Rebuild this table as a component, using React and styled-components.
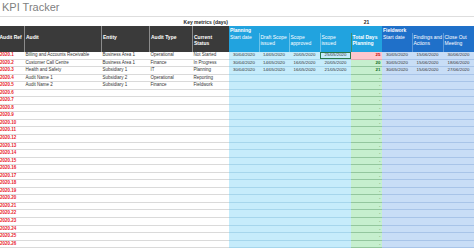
import React from 'react';
import styled, { createGlobalStyle } from 'styled-components';

const COLS = '24px 77px 48px 43px 37px 30px 30px 31px 31px 31px 30px 31px 31px';

const GlobalStyle = createGlobalStyle`
  html, body {
    margin: 0;
    padding: 0;
    background: #fff;
  }
  body {
    font-family: "Liberation Sans", Arial, sans-serif;
    width: 474px;
    height: 251px;
    overflow: hidden;
  }
`;

const Sheet = styled.div`
  width: 474px;
`;

const Title = styled.div`
  height: 17px;
  box-sizing: border-box;
  border-bottom: 1px solid #dedede;
  padding-left: 2px;
  font-size: 11px;
  line-height: 14px;
  color: #7f7f7f;
`;

const Grid = styled.div`
  display: grid;
  grid-template-columns: ${COLS};
`;

const MetricsRow = styled(Grid)`
  height: 9px;
  align-items: center;
  font-size: 5px;
  font-weight: 700;
  color: #1e1e1e;
`;

const MetricsLabel = styled.div`
  grid-column: 1 / 6;
  text-align: right;
  padding-right: 1px;
`;

const MetricsValue = styled.div`
  grid-column: 10;
  text-align: center;
`;

const Header = styled(Grid)`
  height: 26px;
  grid-template-rows: 7px 19px;
  font-size: 5px;
  line-height: 6.5px;
  color: #fff;
`;

const DarkHead = styled.div`
  grid-row: 1 / 3;
  background: #3a3a3a;
  font-weight: 700;
  padding: 7.5px 1px 0;
  white-space: nowrap;
  overflow: hidden;
  border-left: ${p => (p.$first ? 'none' : '1px solid #8c8c8c')};
  ${p => p.$first && 'padding-left: 0; text-indent: -0.5px;'}
`;

const GroupLabel = styled.div`
  grid-column: ${p => p.$cols};
  background: ${p => p.$bg};
  font-weight: 700;
  padding: 0.5px 0 0 1px;
`;

const SubHead = styled.div`
  background: ${p => p.$bg};
  padding: 0.5px 0 0 ${p => (p.$first ? '1px' : '0.5px')};
  border-left: ${p => (p.$first ? 'none' : `1px solid ${p.$line}`)};
  font-weight: ${p => (p.$bold ? 700 : 400)};
`;

const Row = styled(Grid)`
  height: 7.56px;
  line-height: 6.6px;
  color: #333;
`;

const TONES = {
  plain: { bg: '#ffffff', line: '#dadada' },
  plan: { bg: '#c6ecfb', line: '#a6d6ec' },
  total: { bg: '#c6efce', line: '#93c69e' },
  field: { bg: '#c8ddf6', line: '#a8c4e8' },
  bad: { bg: '#ffc7ce', line: '#e6a9b1' },
};

const Cell = styled.div`
  box-sizing: border-box;
  background: ${p => TONES[p.$tone].bg};
  border-bottom: 1px solid ${p => TONES[p.$tone].line};
  padding: 0 ${p => (p.$ref ? '0' : '1.5px')};
  white-space: nowrap;
  overflow: hidden;
  text-align: ${p => p.$align || 'left'};
  font-size: ${p => (p.$small ? '4.4px' : '4.5px')};
  color: ${p => p.$color || '#333'};
  font-weight: ${p => (p.$bold ? 700 : 400)};
  ${p => p.$selected && 'box-shadow: inset 0 0 0 1px #2b7a4b;'}
`;

const PLAN = '#21a3df';
const FIELD = '#1f70c9';

const audits = [
  ['Billing and Accounts Receivable', 'Business Area 1', 'Operational', 'Not Started', ['30/04/2020', '14/05/2020', '20/05/2020', '25/05/2020'], 25, ['30/05/2020', '15/06/2020', '30/06/2020']],
  ['Customer Call Centre', 'Business Area 1', 'Finance', 'In Progress', ['30/04/2020', '14/05/2020', '16/05/2020', '20/05/2020'], 20, ['30/05/2020', '15/06/2020', '18/06/2020']],
  ['Health and Safety', 'Subsidiary 1', 'IT', 'Planning', ['30/04/2020', '14/05/2020', '16/05/2020', '21/05/2020'], 21, ['30/05/2020', '15/06/2020', '27/06/2020']],
  ['Audit Name 1', 'Subsidiary 2', 'Operational', 'Reporting', [], null, []],
  ['Audit Name 2', 'Subsidiary 1', 'Finance', 'Fieldwork', [], null, []],
];

const rows = Array.from({ length: 26 }, (_, i) => {
  const a = audits[i] || ['', '', '', '', [], null, []];
  return { ref: `2020.${i + 1}`, name: a[0], entity: a[1], type: a[2], status: a[3], plan: a[4], total: a[5], field: a[6] };
});

const planHeads = ['Start date', 'Draft Scope issued', 'Scope approved', 'Scope issued'];
const fieldHeads = ['Start date', 'Findings and Actions', 'Close Out Meeting'];

export default function App() {
  return (
    <Sheet>
      <GlobalStyle />
      <Title>KPI Tracker</Title>
      <MetricsRow>
        <MetricsLabel>Key metrics (days)</MetricsLabel>
        <MetricsValue>21</MetricsValue>
      </MetricsRow>
      <Header>
        <DarkHead $first>Audit Ref</DarkHead>
        <DarkHead>Audit</DarkHead>
        <DarkHead>Entity</DarkHead>
        <DarkHead>Audit Type</DarkHead>
        <DarkHead>Current<br />Status</DarkHead>
        <GroupLabel $cols="6 / 11" $bg={PLAN}>Planning</GroupLabel>
        <GroupLabel $cols="11 / 14" $bg={FIELD}>Fieldwork</GroupLabel>
        {planHeads.map((h, i) => (
          <SubHead key={h} $bg={PLAN} $line="#6cc3ea" $first={i === 0}>{h}</SubHead>
        ))}
        <SubHead $bg={PLAN} $line="#3f8f6e" $bold>Total Days<br />Planning</SubHead>
        {fieldHeads.map((h, i) => (
          <SubHead key={h} $bg={FIELD} $line="#5f9ad9" $first={i === 0}>{h}</SubHead>
        ))}
      </Header>
      {rows.map((r, i) => (
        <Row key={r.ref}>
          <Cell $tone="plain" $ref $bold $color="#e8202a">{r.ref}</Cell>
          <Cell $tone="plain">{r.name}</Cell>
          <Cell $tone="plain">{r.entity}</Cell>
          <Cell $tone="plain">{r.type}</Cell>
          <Cell $tone="plain">{r.status}</Cell>
          {[0, 1, 2, 3].map(k => (
            <Cell key={k} $tone="plan" $align="center" $small $selected={i === 0 && k === 3}>
              {r.plan[k] || ''}
            </Cell>
          ))}
          {r.total === 25 ? (
            <Cell $tone="bad" $align="right" $bold $small $color="#c00000">{r.total}</Cell>
          ) : (
            <Cell $tone="total" $align="right" $bold={r.total != null} $small $color="#0f6b1c">
              {r.total != null ? r.total : '-'}
            </Cell>
          )}
          {[0, 1, 2].map(k => (
            <Cell key={k} $tone="field" $align="center" $small>{r.field[k] || ''}</Cell>
          ))}
        </Row>
      ))}
    </Sheet>
  );
}
